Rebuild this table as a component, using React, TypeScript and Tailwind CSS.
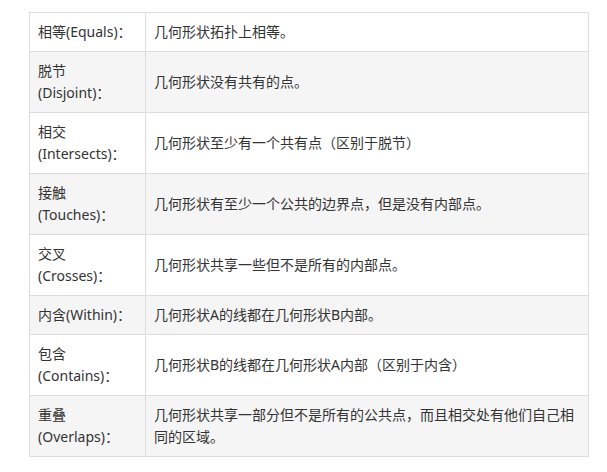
import React from 'react';

const rows: [string, string][] = [
  ['相等(Equals)：', '几何形状拓扑上相等。'],
  ['脱节(Disjoint)：', '几何形状没有共有的点。'],
  ['相交(Intersects)：', '几何形状至少有一个共有点（区别于脱节）'],
  ['接触(Touches)：', '几何形状有至少一个公共的边界点，但是没有内部点。'],
  ['交叉(Crosses)：', '几何形状共享一些但不是所有的内部点。'],
  ['内含(Within)：', '几何形状A的线都在几何形状B内部。'],
  ['包含(Contains)：', '几何形状B的线都在几何形状A内部（区别于内含）'],
  ['重叠(Overlaps)：', '几何形状共享一部分但不是所有的公共点，而且相交处有他们自己相同的区域。'],
];

const App: React.FC = () => {
  return (
    <div
      className="min-h-[472px] bg-white pt-3 pl-[29px] text-[14px] leading-[22px] text-[#333]"
      style={{ fontFamily: '"Noto Sans", "Noto Sans CJK SC", sans-serif' }}
    >
      <table className="w-[560px] table-fixed border-collapse">
        <colgroup>
          <col className="w-[116px]" />
          <col />
        </colgroup>
        <tbody>
          {rows.map(([name, desc], i) => (
            <tr key={name} className={i % 2 === 1 ? 'bg-[#f5f5f5]' : 'bg-white'}>
              <td className="border border-[#dddddd] px-2 py-2 align-middle">{name}</td>
              <td className="border border-[#dddddd] px-2 py-2 align-middle">{desc}</td>
            </tr>
          ))}
        </tbody>
      </table>
    </div>
  );
};

export default App;
